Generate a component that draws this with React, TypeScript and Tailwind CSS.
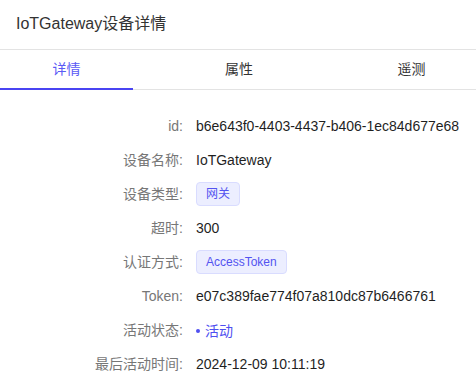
import React from "react";

const font = { fontFamily: '"Liberation Sans", "Noto Sans CJK SC", sans-serif' };

function Tag({ children }: { children: React.ReactNode }) {
  return (
    <span className="inline-flex h-[24px] items-center rounded-[4px] border border-[#d9dcff] bg-[#eceeff] px-[9px] text-[12px] text-[#5353f0]">
      {children}
    </span>
  );
}

const rows: { label: string; value: React.ReactNode }[] = [
  { label: "id:", value: "b6e643f0-4403-4437-b406-1ec84d677e68" },
  { label: "设备名称:", value: "IoTGateway" },
  { label: "设备类型:", value: <Tag>网关</Tag> },
  { label: "超时:", value: "300" },
  { label: "认证方式:", value: <Tag>AccessToken</Tag> },
  { label: "Token:", value: "e07c389fae774f07a810dc87b6466761" },
  {
    label: "活动状态:",
    value: (
      <span className="inline-flex items-center gap-[5px] text-[#4f4ff0]">
        <span className="h-[4px] w-[4px] rounded-full bg-[#4f4ff0]" />
        活动
      </span>
    ),
  },
  { label: "最后活动时间:", value: "2024-12-09 10:11:19" },
];

export default function App() {
  return (
    <div className="h-[387px] w-[476px] overflow-hidden bg-white" style={font}>
      <div className="flex h-[50px] items-center border-b border-[#e3e3e3] pl-[16px] pb-[1px] text-[16px] text-[#333]">
        IoTGateway设备详情
      </div>
      <div className="flex h-[40px] border-b border-[#e3e3e3] text-[14px]">
        <div className="relative flex w-[133px] items-center justify-center text-[#5a5af5]">
          详情
          <span className="absolute bottom-[-1px] left-0 right-0 h-[2px] bg-[#4a44f2]" />
        </div>
        <div className="flex w-[212px] items-center justify-center text-[#333]">属性</div>
        <div className="flex flex-1 items-center justify-center pl-[2px] text-[#333]">遥测</div>
      </div>
      <div className="pt-[19px]">
        {rows.map((r) => (
          <div key={r.label} className="flex h-[34px] items-center text-[14px]">
            <div className="w-[183px] shrink-0 text-right text-[#777]">{r.label}</div>
            <div className="pl-[13px] text-[#1f1f1f]">{r.value}</div>
          </div>
        ))}
      </div>
    </div>
  );
}
